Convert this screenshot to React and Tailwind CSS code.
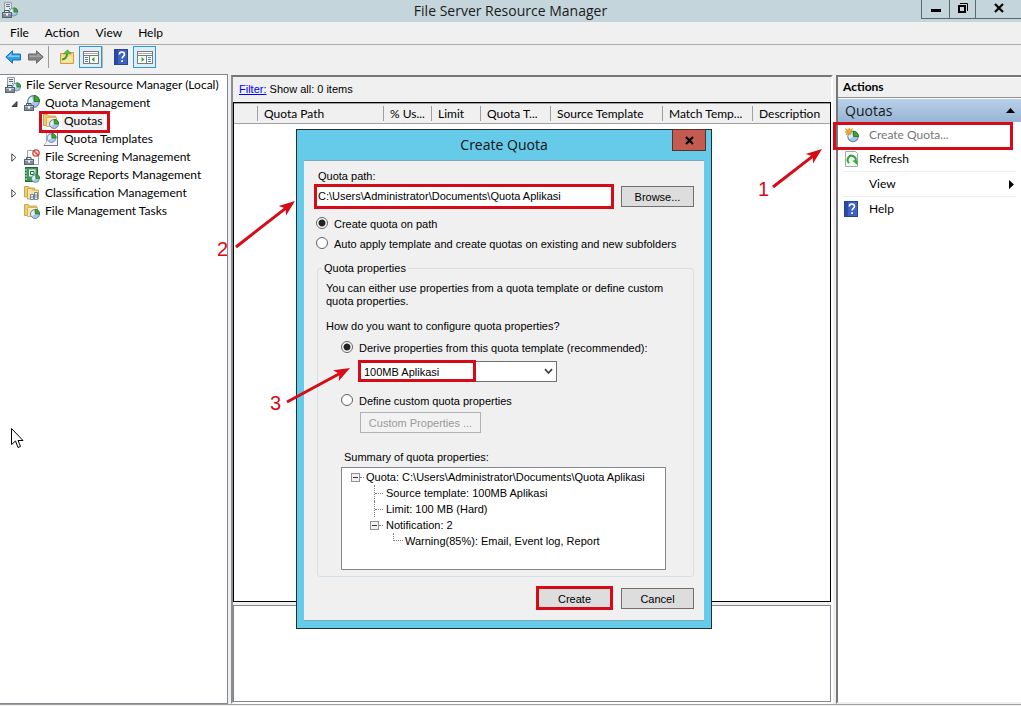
import React from 'react';

const TITLE_FONT = "font-['Open_Sans','Noto_Sans',sans-serif]";
const UI_FONT = "font-['Lato','Open_Sans',sans-serif]";
const DIALOG_FONT = "font-['Liberation_Sans',Arial,sans-serif]";

/* ---------- icons ---------- */

const Svg = ({ size = 16, children }) => (
  <svg width={size} height={size} viewBox="0 0 16 16" className="shrink-0" aria-hidden="true">
    {children}
  </svg>
);

const Pie = ({ x = 11, y = 11, r = 4.5 }) => (
  <g transform={`translate(${x} ${y}) scale(${r})`}>
    <circle r="1" fill="#a9c6e6" stroke="#5f83ad" strokeWidth="0.2" />
    <path d="M-.7 .5A.85 .85 0 0 1-.3-.8L0 0z" fill="#e3eefa" />
    <path d="M.1 0V-1.05A1 1 0 0 1 1.05 0z" fill="#3fa535" stroke="#1f6d1c" strokeWidth="0.15" />
  </g>
);

const Toolbox = () => (
  <g>
    <path d="M2.500 10.500V8.500h4.500v2" fill="none" stroke="#4b545c" />
    <rect x="0.500" y="10.500" width="9" height="5" fill="#7f8d99" stroke="#56636d" />
    <path d="M1 11.500h8" stroke="#b9c5ce" />
    <rect x="4" y="11.500" width="2" height="2" fill="#fff" />
  </g>
);

const FolderShape = () => (
  <g>
    <path d="M.5 1.500h4l1 1.500h7v9.500H.5z" fill="#eecb77" stroke="#cfa650" />
    <path d="M3.500 4.500h10v9h-10z" fill="#fbe3a0" stroke="#d8b362" />
    <path d="M4.500 5.500h8" stroke="#fff4cf" />
  </g>
);

const ServerIcon = () => (
  <Svg>
    <path d="M2.500 .5h7v12h-7z" fill="#e4eaee" stroke="#929da4" />
    <path d="M4 2.500h4M4 4.500h4" stroke="#5d6c76" />
    <rect x="7" y="6" width="1" height="1" fill="#3fa535" />
    <Pie x={11.5} y={10} r={4} />
    <Toolbox />
  </Svg>
);

const QuotaManagementIcon = () => (
  <Svg>
    <Pie x={9.5} y={6.5} r={5.8} />
    <Toolbox />
  </Svg>
);

const FolderPieIcon = () => (
  <Svg>
    <FolderShape />
    <Pie />
  </Svg>
);

const TemplateIcon = () => (
  <Svg>
    <path d="M3.500 .5h11v14H.8L3.500 11z" fill="#f4f5f6" stroke="#b3b3b3" />
    <path d="M1 14.500h13.500V1" fill="none" stroke="#777" />
    <Pie x={8.5} y={7} r={4.4} />
  </Svg>
);

const ScreeningIcon = () => (
  <Svg>
    <path d="M3.500 1.500h8l3 3v11h-11z" fill="#fff" stroke="#9aa3aa" />
    <Toolbox />
    <circle cx="12" cy="4" r="3.200" fill="#fde3e1" stroke="#d9443b" strokeWidth="1.300" />
    <path d="M9.800 1.800l4.400 4.400" stroke="#d9443b" strokeWidth="1.300" />
  </Svg>
);

const ReportsIcon = () => (
  <Svg>
    <rect x="1.500" y=".5" width="12" height="14" fill="#3b9a55" stroke="#20683a" />
    <rect x="5" y="2.500" width="6.500" height="7" fill="#e8f5ea" />
    <path d="M6.500 4.500h3.500v3H6.500z" fill="none" stroke="#20683a" />
    <path d="M0 3h3M0 6h3M0 9h3M0 12h3" stroke="#d6dfd9" />
    <Pie x={11.5} y={11.5} r={3.900} />
  </Svg>
);

const ClassificationIcon = () => (
  <Svg>
    <path d="M.5 1.500h4l1 1.500h5v9H.5z" fill="#f0cf7c" stroke="#cfa650" />
    <path d="M3.500 3.500h4l1 1.500h6v9h-11z" fill="#fbe3a0" stroke="#cfa650" />
    <path d="M6.500 9.500h3v5h-3zM10.500 7.500h3v7h-3z" fill="#eef3f8" stroke="#71869c" />
    <path d="M7 12h2M11 10h2M11 12h2" stroke="#71869c" />
  </Svg>
);

const HelpIcon = () => (
  <Svg>
    <rect x="1.500" y=".5" width="13" height="15" fill="#3d62c4" stroke="#274494" />
    <path d="M2 1h3v14H2z" fill="#2b4aa3" />
    <path d="M6.300 5.600C6.300 3.800 7.400 3 8.900 3s2.600.9 2.600 2.400c0 1.900-2.400 2-2.400 4.100" fill="none" stroke="#fff" strokeWidth="1.600" />
    <rect x="8.200" y="11.200" width="1.800" height="1.800" fill="#fff" />
  </Svg>
);

const RefreshIcon = () => (
  <Svg>
    <path d="M1.500 .5h10l2 2v13h-12z" fill="#f7f9f7" stroke="#a3aaa5" />
    <path d="M5.300 12A4 4 0 1 1 11.300 10.500" fill="none" stroke="#3aa53a" strokeWidth="2" />
    <path d="M8 9.500h5.500v4.500z" fill="#3aa53a" />
  </Svg>
);

const CreateQuotaIcon = () => (
  <Svg>
    <Pie x={9} y={9.5} r={5.2} />
    <path d="M1 1.500L4 3 5.500 .8 6 3.500 8.500 1.500 7.500 5 6.500 8 4.500 6.500 2 8 3 5.500 .8 5 3 4z" fill="#f4a62a" stroke="#d98412" strokeWidth="0.500" />
  </Svg>
);

const ArrowIcon = ({ flip, from, to, edge }) => (
  <Svg>
    <g transform={flip ? 'translate(16 0) scale(-1 1)' : undefined}>
      <path d="M.8 8L7.500 1.800V5h8v6h-8v3.200z" fill={from} stroke={edge} />
      <path d="M2.500 8L6.500 4.300V6.500h8v1.500z" fill={to} />
    </g>
  </Svg>
);

const UpFolderIcon = () => (
  <Svg>
    <path d="M1.500 4.500h6l1-1h6v11h-13z" fill="#f3d681" stroke="#c79f48" />
    <path d="M2.500 7.500h11v6h-11z" fill="#f8e3a0" />
    <path d="M3 10.500C6 10 8 8 8 5" fill="none" stroke="#3aa12e" strokeWidth="2" />
    <path d="M4.500 4.800L8.500 .8l3.700 4z" fill="#55bd3f" stroke="#2f8b27" strokeWidth="0.500" />
  </Svg>
);

const PaneIcon = ({ right }) => (
  <Svg>
    <g transform={right ? 'translate(16 0) scale(-1 1)' : undefined}>
      <rect x=".5" y="2.500" width="15" height="12" fill="#fff" stroke="#77797c" />
      <path d="M1 4.500h14" stroke="#a9abad" />
      <path d="M1 6.500h14M6.500 7v7" stroke="#77797c" />
      <path d="M2 8.500h3M2 10.500h3M2 12.500h3" stroke="#4d7fc0" />
      <path d="M11.500 8v5L8.500 10.500z" fill="#2fa82b" />
    </g>
  </Svg>
);

/* ---------- window chrome ---------- */

function TitleBar() {
  return (
    <header className="relative flex h-[22px] shrink-0 items-start justify-between bg-[#c4d6dc]">
      <div className="py-[2px] pl-[2px]">
        <ServerIcon />
      </div>
      <h1 className={`absolute inset-x-0 top-0 text-center text-[14px] leading-[21px] text-[#1a1a1a] ${TITLE_FONT}`}>
        File Server Resource Manager
      </h1>
      <div className="relative flex h-[19px] border-b border-l border-[#5c666b]">
        <button aria-label="Minimize" className="flex w-[28px] items-center justify-center border-r border-[#5c666b]">
          <svg width="10" height="10" viewBox="0 0 10 10"><path d="M0 5h10v3H0z" /></svg>
        </button>
        <button aria-label="Restore" className="flex w-[26px] items-center justify-center border-r border-[#5c666b] pb-[2px]">
          <svg width="10" height="10" viewBox="0 0 10 10" fill="none" stroke="#000">
            <path d="M1 3h6v6H1z" strokeWidth="2" />
            <path d="M2 .5h7.500V8" />
          </svg>
        </button>
        <button aria-label="Close" className="flex w-[45px] items-center justify-center pb-[2px]">
          <svg width="10" height="10" viewBox="0 0 10 10"><path d="M1 1l8 8M9 1L1 9" stroke="#000" strokeWidth="2.200" /></svg>
        </button>
      </div>
    </header>
  );
}

const MENU = ['File', 'Action', 'View', 'Help'];

function MenuBar() {
  return (
    <nav className="flex h-[23px] shrink-0 items-center gap-4 border-b border-[#a9a9a9] px-[10px] text-[12px]">
      {MENU.map((label) => (
        <button key={label}>{label}</button>
      ))}
    </nav>
  );
}

function Toolbar() {
  return (
    <div className="flex h-[29px] shrink-0 items-start pt-px pl-[5px]">
      <div className="flex h-[22px] items-center">
        <button aria-label="Back" className="mr-[7px]"><ArrowIcon from="#2f9fe6" to="#7fd0fa" edge="#1c6fb4" /></button>
        <button aria-label="Forward" className="mr-1"><ArrowIcon flip from="#858585" to="#a5a5a5" edge="#666" /></button>
        <span className="mr-[10px] h-full w-px bg-[#9b9b9b]" />
        <button aria-label="Up one level" className="mr-1"><UpFolderIcon /></button>
        <button aria-label="Show console tree" className="flex h-[22px] w-[23px] items-center justify-center border border-[#2d9ad8] bg-[#deedf8]">
          <PaneIcon />
        </button>
        <span className="mr-[10px] h-full w-px bg-[#b5b5b5]" />
        <button aria-label="Help" className="mr-1"><HelpIcon /></button>
        <button aria-label="Show action pane" className="flex h-[22px] w-[23px] items-center justify-center border border-[#2d9ad8] bg-[#deedf8]">
          <PaneIcon right />
        </button>
      </div>
    </div>
  );
}

/* ---------- console tree ---------- */

const TREE = [
  { label: 'File Server Resource Manager (Local)', icon: ServerIcon, pad: 'pl-[5px]' },
  { label: 'Quota Management', icon: QuotaManagementIcon, pad: 'pl-[11px]', toggle: 'open' },
  { label: 'Quotas', icon: FolderPieIcon, pad: 'pl-[43px]', selected: true },
  { label: 'Quota Templates', icon: TemplateIcon, pad: 'pl-[43px]' },
  { label: 'File Screening Management', icon: ScreeningIcon, pad: 'pl-[11px]', toggle: 'closed' },
  { label: 'Storage Reports Management', icon: ReportsIcon, pad: 'pl-6' },
  { label: 'Classification Management', icon: ClassificationIcon, pad: 'pl-[11px]', toggle: 'closed' },
  { label: 'File Management Tasks', icon: FolderPieIcon, pad: 'pl-6' },
];

const Toggle = ({ state }) => (
  <svg width="8" height="9" viewBox="0 0 8 9" className="mr-[5px] shrink-0" aria-hidden="true">
    {state === 'open' ? (
      <path d="M6 2.500v5h-5z" fill="#555" stroke="#222" strokeWidth="0.800" />
    ) : (
      <path d="M.8 .8v7.400L4.800 4.500z" fill="#fff" stroke="#444" />
    )}
  </svg>
);

function ConsoleTree() {
  return (
    <aside className="w-[228px] shrink-0 border-t border-r border-b border-[#828790] bg-white">
      <ul className="pt-px text-[12px]">
        {TREE.map(({ label, icon: Icon, pad, toggle, selected }) => (
          <li key={label} className={`flex h-[18px] items-center whitespace-nowrap ${pad}`}>
            {toggle && <Toggle state={toggle} />}
            <Icon />
            <span className={`ml-[3px] px-[2px] leading-[16px] ${selected ? 'bg-[#f0f0f0]' : ''}`}>{label}</span>
          </li>
        ))}
      </ul>
    </aside>
  );
}

/* ---------- quota list ---------- */

const COLUMNS = [
  { label: '', width: 'w-[24px]' },
  { label: 'Quota Path', width: 'w-[126px]' },
  { label: '% Us...', width: 'w-[48px]' },
  { label: 'Limit', width: 'w-[49px]' },
  { label: 'Quota T...', width: 'w-[70px]' },
  { label: 'Source Template', width: 'w-[112px]' },
  { label: 'Match Temp...', width: 'w-[90px]' },
  { label: 'Description', width: '' },
];

function QuotaList() {
  return (
    <main className="flex min-w-0 flex-1 flex-col border-t-2 border-r-2 border-b-2 border-l-2 border-t-[#77777a] border-r-white border-b-white border-l-[#8c8c90]">
      <p className={`h-[25px] shrink-0 pl-[6px] text-[11px] leading-[24px] ${DIALOG_FONT}`}>
        <a href="#filter" className="text-[#0000ff] underline">Filter:</a> Show all: 0 items
      </p>
      <div className="flex-1 border border-black bg-white">
        <table className="w-full table-fixed border-collapse text-left text-[12px]">
          <thead className="bg-[#f0f0f0]">
            <tr className="h-[20px] border-t border-b border-[#a0a0a0]">
              {COLUMNS.map(({ label, width }, i) => (
                <th key={i} className={`p-0 font-normal ${width}`}>
                  <div className={`h-[15px] overflow-hidden pl-[6px] leading-[15px] whitespace-nowrap ${i < 7 ? 'border-r border-[#a0a0a0]' : ''}`}>
                    {label}
                  </div>
                </th>
              ))}
            </tr>
          </thead>
        </table>
      </div>
      <div className="mt-[3px] h-[97px] shrink-0 border border-[#828790] bg-white" />
    </main>
  );
}

/* ---------- actions pane ---------- */

function ActionsPane() {
  return (
    <aside className="ml-[3px] w-[185px] shrink-0 border-t-2 border-b-2 border-l-2 border-t-[#77777a] border-b-[#f0f0f0] border-l-[#77777a] bg-white text-[12px]">
      <h2 className="mt-px h-[20px] border-b border-[#8f8f8f] bg-[#f0f0f0] pl-[5px] leading-[18px] font-bold">Actions</h2>
      <div className="mt-px flex h-[23px] items-center justify-between bg-linear-to-b from-[#b9d1ea] to-[#97b4d4] pr-[6px] pl-[7px]">
        <h3 className={`text-[14px] text-[#1a1a1a] ${TITLE_FONT}`}>Quotas</h3>
        <svg width="9" height="5" viewBox="0 0 9 5"><path d="M4.500 0L9 5H0z" /></svg>
      </div>
      <ul>
        <li className="flex h-[25px] items-center pl-[6px]">
          <CreateQuotaIcon />
          <button disabled className="ml-[9px] text-[#777]">Create Quota...</button>
        </li>
        <li className="mx-[5px] flex h-[25px] items-center border-b border-[#eee] pl-px">
          <RefreshIcon />
          <button className="ml-[9px]">Refresh</button>
        </li>
        <li className="mx-[5px] flex h-[25px] items-center justify-between border-b border-[#eee] pr-[2px] pl-[26px]">
          <button>View</button>
          <svg width="5" height="9" viewBox="0 0 5 9"><path d="M0 0l5 4.500L0 9z" /></svg>
        </li>
        <li className="flex h-[24px] items-center pl-[5px]">
          <HelpIcon />
          <button className="ml-[10px]">Help</button>
        </li>
      </ul>
    </aside>
  );
}

/* ---------- create quota dialog ---------- */

const BUTTON = 'h-[21px] w-[73px] shrink-0 border border-[#707070] bg-[#dddddd] pt-px';

function Radio({ id, name, label, checked }) {
  return (
    <div className="flex items-center gap-[6px]">
      <input
        type="radio"
        id={id}
        name={name}
        defaultChecked={checked}
        className="h-3 w-3 appearance-none rounded-full border border-[#606060] bg-white checked:bg-[radial-gradient(circle,#222_3px,white_4px)]"
      />
      <label htmlFor={id} className="pt-[2px] leading-[14px] whitespace-nowrap">{label}</label>
    </div>
  );
}

const Minus = () => (
  <span className="flex h-[9px] w-[9px] shrink-0 items-center justify-center border border-[#919191] bg-[#f0f0f0]">
    <span className="h-px w-[5px] bg-[#333]" />
  </span>
);

const Dots = () => <span className="mr-[3px] h-px w-2 shrink-0 border-t border-dotted border-[#808080]" />;

function Summary() {
  return (
    <ul className="h-[103px] border border-[#828790] bg-white pt-px pl-[9px] leading-4 whitespace-nowrap">
      <li>
        <div className="flex items-center"><Minus /><span className="mr-[2px] w-1 border-t border-dotted border-[#808080]" />Quota: C:\Users\Administrator\Documents\Quota Aplikasi</div>
        <ul>
          <li className="ml-[23px] flex items-center border-l border-dotted border-[#808080]"><Dots />Source template: 100MB Aplikasi</li>
          <li className="ml-[23px] flex items-center border-l border-dotted border-[#808080]"><Dots />Limit: 100 MB (Hard)</li>
          <li className="ml-[19px]">
            <div className="flex items-center"><Minus /><span className="mr-[3px] w-1 border-t border-dotted border-[#808080]" />Notification: 2</div>
            <ul>
              <li className="ml-[23px] flex items-center">
                <span className="mr-[2px] mb-2 h-2 w-[10px] border-b border-l border-dotted border-[#808080]" />
                Warning(85%): Email, Event log, Report
              </li>
            </ul>
          </li>
        </ul>
      </li>
    </ul>
  );
}

function CreateQuotaDialog() {
  return (
    <section
      role="dialog"
      aria-labelledby="dialog-title"
      className="absolute top-[129px] left-[296px] w-[416px] border border-[#1f2f38] bg-[#66cae9] px-[7px] pb-[7px]"
    >
      <div className="relative h-[30px]">
        <h2 id="dialog-title" className={`text-center text-[14px] leading-[30px] text-[#111] ${TITLE_FONT}`}>Create Quota</h2>
        <button aria-label="Close dialog" className="absolute -top-px -right-[2px] flex h-[22px] w-[34px] items-center justify-center border border-[#5b2f2a] bg-[#c35b50]">
          <svg width="9" height="9" viewBox="0 0 9 9"><path d="M1 1l7 7M8 1L1 8" stroke="#000" strokeWidth="2.200" /></svg>
        </button>
      </div>
      <form className={`border-t border-b border-[#7fa9bb] bg-[#f0f0f0] px-[10px] pt-[7px] pb-[11px] text-[11px] ${DIALOG_FONT}`}>
        <label htmlFor="path" className="block pl-1 leading-4">Quota path:</label>
        <div className="flex justify-between pt-[2px]">
          <input
            id="path"
            defaultValue="C:\Users\Administrator\Documents\Quota Aplikasi"
            className="h-[21px] w-[298px] border border-[#707070] bg-white px-[3px] pb-[2px]"
          />
          <button type="button" className={BUTTON}>Browse...</button>
        </div>
        <div className="mt-2 space-y-1 pl-[2px]">
          <Radio id="on-path" name="scope" label="Create quota on path" checked />
          <Radio id="auto" name="scope" label="Auto apply template and create quotas on existing and new subfolders" />
        </div>
        <fieldset className="mt-[10px] ml-[3px] min-w-0 rounded-[3px] border border-[#d5dfe5] pr-[27px] pb-[6px] pl-2">
          <legend className="-ml-1 px-[2px] leading-[14px]">Quota properties</legend>
          <p className="mt-[7px] leading-[13px]">
            You can either use properties from a quota template or define custom quota properties.
          </p>
          <p className="mt-[10px] leading-4">How do you want to configure quota properties?</p>
          <div className="mt-[5px] pl-[15px]">
            <Radio id="derive" name="source" label="Derive properties from this quota template (recommended):" checked />
            <div className="relative mt-[6px] ml-[18px] w-[198px]">
              <select aria-label="Quota template" className="block h-[21px] w-full appearance-none border border-[#707070] bg-white pt-px pl-1">
                <option>100MB Aplikasi</option>
              </select>
              <svg width="9" height="7" viewBox="0 0 9 7" className="pointer-events-none absolute top-[7px] right-[4px]">
                <path d="M1 1.200l3.500 3.800L8 1.200" fill="none" stroke="#444" strokeWidth="1.800" />
              </svg>
            </div>
            <div className="mt-[10px]">
              <Radio id="custom" name="source" label="Define custom quota properties" />
            </div>
            <button type="button" disabled className="mt-1 ml-[19px] block h-[21px] w-[121px] border border-[#adb2b5] bg-[#f2f2f2] pt-px text-[#9a9a9a]">
              Custom Properties ...
            </button>
            <p className="mt-4 mb-[2px] pl-[3px] leading-4">Summary of quota properties:</p>
            <Summary />
          </div>
        </fieldset>
        <div className="mt-[11px] flex justify-end gap-[10px]">
          <button type="button" className={BUTTON}>Create</button>
          <button type="button" className={BUTTON}>Cancel</button>
        </div>
      </form>
    </section>
  );
}

/* ---------- step markers drawn over the windows ---------- */

const Highlight = ({ className }) => (
  <div className={`pointer-events-none absolute border-[3px] border-[#d70a17] ${className}`} />
);

const Step = ({ n, className }) => (
  <span className={`absolute text-[20px] leading-5 text-[#d70a17] ${DIALOG_FONT} ${className}`}>{n}</span>
);

const ARROWS = [
  { x1: 773, y1: 187, x2: 822, y2: 149 },
  { x1: 236, y1: 247, x2: 295, y2: 201 },
  { x1: 287, y1: 402, x2: 350, y2: 368 },
];

function Steps() {
  return (
    <>
      <Highlight className="top-[111px] left-[39px] h-[22px] w-[71px]" />
      <Highlight className="top-[122px] left-[833px] h-[28px] w-[180px]" />
      <Highlight className="top-[184px] left-[314px] h-[25px] w-[300px]" />
      <Highlight className="top-[360px] left-[358px] h-[22px] w-[118px]" />
      <Highlight className="top-[586px] left-[536px] h-[24px] w-[77px]" />
      <svg width="1021" height="706" viewBox="0 0 1021 706" className="pointer-events-none absolute top-0 left-0" aria-hidden="true">
        {ARROWS.map(({ x1, y1, x2, y2 }) => {
          const angle = (Math.atan2(y2 - y1, x2 - x1) * 180) / Math.PI;
          const length = Math.hypot(x2 - x1, y2 - y1);
          return (
            <g key={x1} transform={`translate(${x1} ${y1}) rotate(${angle})`} fill="#d70a17">
              <path d={`M0 -1.5H${length - 10}V1.5H0z`} />
              <path d={`M${length} 0L${length - 16} -6L${length - 12} 0L${length - 16} 6z`} />
            </g>
          );
        })}
        <path d="M11.500 428.500v16l4-3.500 2.500 6.500 2.500-1-2.500-6h5z" fill="#fff" stroke="#000" />
      </svg>
      <Step n="1" className="top-[179px] left-[758px]" />
      <Step n="2" className="top-[239px] left-[217px]" />
      <Step n="3" className="top-[393px] left-[270px]" />
    </>
  );
}

export default function App() {
  return (
    <div className={`relative flex h-screen flex-col overflow-hidden bg-[#f0f0f0] text-black ${UI_FONT}`}>
      <TitleBar />
      <MenuBar />
      <Toolbar />
      <div className="mb-px flex min-h-0 flex-1 border-b border-[#a0a0a0]">
        <ConsoleTree />
        <div className="ml-[3px] flex min-w-0 flex-1 pt-px">
          <QuotaList />
          <ActionsPane />
        </div>
      </div>
      <CreateQuotaDialog />
      <Steps />
    </div>
  );
}
